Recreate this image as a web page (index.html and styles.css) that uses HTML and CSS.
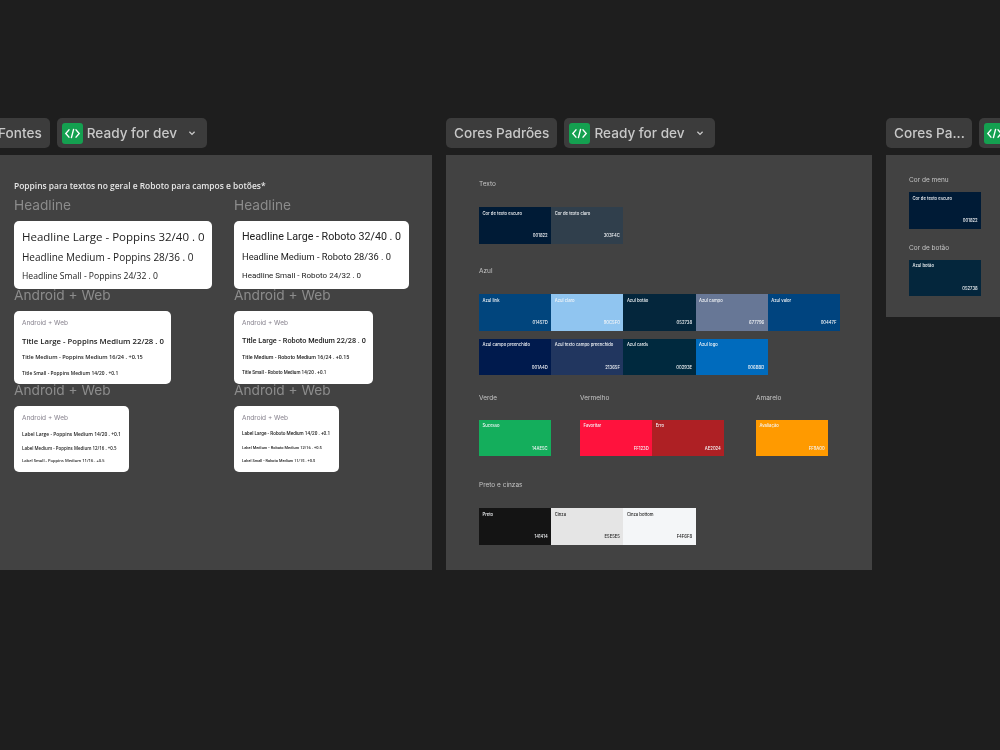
FILE: index.html
```html
<!DOCTYPE html>
<html lang="en">
<head>
    <meta charset="UTF-8">
    <meta name="viewport" content="width=device-width, initial-scale=1.0">
    <title>Design system</title>
    <link rel="stylesheet" href="styles.css">
</head>
<body>
<div class="canvas">

    <!-- Fontes -->
    <section class="board boardFontes">
        <div class="boardHead">
            <div class="chip">Fontes</div>
            <div class="chip chipDev">
                <span class="devIcon"><svg width="21" height="21" viewBox="0 0 21 21"><path d="M7.4 6.4 3.8 10.5l3.6 4.1M13.6 6.4l3.6 4.1-3.6 4.1M11.7 5.8l-2.4 9.4"/></svg></span>
                <span>Ready for dev</span>
                <svg class="chevron" width="10" height="10" viewBox="0 0 10 10"><path d="M2.4 3.8 5 6.4l2.6-2.6"/></svg>
            </div>
        </div>
        <div class="frame frameFontes">
            <p class="intro">Poppins para textos no geral e Roboto para campos e botões*</p>
            <div class="typeColumns">
                <div class="typeColumn poppins">
                    <div class="typeLabel">Headline</div>
                    <div class="typeCard headlineCard w198">
                        <div class="hl">Headline Large - Poppins 32/40 . 0</div>
                        <div class="hm">Headline Medium - Poppins 28/36 . 0</div>
                        <div class="hs">Headline Small - Poppins 24/32 . 0</div>
                    </div>
                    <div class="typeLabel">Android + Web</div>
                    <div class="typeCard titleCard w157">
                        <div class="cardTag">Android + Web</div>
                        <div class="tl">Title Large - Poppins Medium 22/28 . 0</div>
                        <div class="tm">Title Medium - Poppins Medium 16/24 . +0.15</div>
                        <div class="ts">Title Small - Poppins Medium 14/20 . +0.1</div>
                    </div>
                    <div class="typeLabel">Android + Web</div>
                    <div class="typeCard labelCard w115">
                        <div class="cardTag">Android + Web</div>
                        <div class="ll">Label Large - Poppins Medium 14/20 . +0.1</div>
                        <div class="lm">Label Medium - Poppins Medium 12/16 . +0.5</div>
                        <div class="ls">Label Small - Poppins Medium 11/16 . +0.5</div>
                    </div>
                </div>
                <div class="typeColumn roboto">
                    <div class="typeLabel">Headline</div>
                    <div class="typeCard headlineCard w175">
                        <div class="hl">Headline Large - Roboto 32/40 . 0</div>
                        <div class="hm">Headline Medium - Roboto 28/36 . 0</div>
                        <div class="hs">Headline Small - Roboto 24/32 . 0</div>
                    </div>
                    <div class="typeLabel">Android + Web</div>
                    <div class="typeCard titleCard w139">
                        <div class="cardTag">Android + Web</div>
                        <div class="tl">Title Large - Roboto Medium 22/28 . 0</div>
                        <div class="tm">Title Medium - Roboto Medium 16/24 . +0.15</div>
                        <div class="ts">Title Small - Roboto Medium 14/20 . +0.1</div>
                    </div>
                    <div class="typeLabel">Android + Web</div>
                    <div class="typeCard labelCard w105">
                        <div class="cardTag">Android + Web</div>
                        <div class="ll">Label Large - Roboto Medium 14/20 . +0.1</div>
                        <div class="lm">Label Medium - Roboto Medium 12/16 . +0.5</div>
                        <div class="ls">Label Small - Roboto Medium 11/15 . +0.5</div>
                    </div>
                </div>
            </div>
        </div>
    </section>

    <!-- Cores Padroes -->
    <section class="board boardCores">
        <div class="boardHead">
            <div class="chip">Cores Padrões</div>
            <div class="chip chipDev">
                <span class="devIcon"><svg width="21" height="21" viewBox="0 0 21 21"><path d="M7.4 6.4 3.8 10.5l3.6 4.1M13.6 6.4l3.6 4.1-3.6 4.1M11.7 5.8l-2.4 9.4"/></svg></span>
                <span>Ready for dev</span>
                <svg class="chevron" width="10" height="10" viewBox="0 0 10 10"><path d="M2.4 3.8 5 6.4l2.6-2.6"/></svg>
            </div>
        </div>
        <div class="frame frameCores">
            <div class="colorLabel">Texto</div>
            <div class="swatchRow">
                <div class="swatch c001822"><span>Cor de texto escuro</span><span class="code">001822</span></div>
                <div class="swatch c303F4C"><span>Cor de texto claro</span><span class="code">303F4C</span></div>
            </div>

            <div class="colorLabel sectionAzul">Azul</div>
            <div class="swatchRow">
                <div class="swatch c01457D"><span>Azul link</span><span class="code">01457D</span></div>
                <div class="swatch c90C5F0"><span>Azul claro</span><span class="code">90C5F0</span></div>
                <div class="swatch c052738"><span>Azul botão</span><span class="code">052738</span></div>
                <div class="swatch c677796"><span>Azul campo</span><span class="code">677796</span></div>
                <div class="swatch c00447F"><span>Azul valor</span><span class="code">00447F</span></div>
            </div>
            <div class="swatchRow rowSecond">
                <div class="swatch c001A4D"><span>Azul campo preenchido</span><span class="code">001A4D</span></div>
                <div class="swatch c21365F"><span>Azul texto campo preenchido</span><span class="code">21365F</span></div>
                <div class="swatch c00293E"><span>Azul cards</span><span class="code">00293E</span></div>
                <div class="swatch c006BBD"><span>Azul logo</span><span class="code">006BBD</span></div>
            </div>

            <div class="colorGroups">
                <div class="colorGroup groupVerde">
                    <div class="colorLabel">Verde</div>
                    <div class="swatchRow">
                        <div class="swatch c14AE5C"><span>Sucesso</span><span class="code">14AE5C</span></div>
                    </div>
                </div>
                <div class="colorGroup groupVermelho">
                    <div class="colorLabel">Vermelho</div>
                    <div class="swatchRow">
                        <div class="swatch cFF123D"><span>Favoritar</span><span class="code">FF123D</span></div>
                        <div class="swatch cAE2024"><span>Erro</span><span class="code">AE2024</span></div>
                    </div>
                </div>
                <div class="colorGroup">
                    <div class="colorLabel">Amarelo</div>
                    <div class="swatchRow">
                        <div class="swatch cFF9A00"><span>Avaliação</span><span class="code">FF9A00</span></div>
                    </div>
                </div>
            </div>

            <div class="colorLabel sectionPreto">Preto e cinzas</div>
            <div class="swatchRow">
                <div class="swatch c141414"><span>Preto</span><span class="code">141414</span></div>
                <div class="swatch cE5E5E5 darkText"><span>Cinza</span><span class="code">E5E5E5</span></div>
                <div class="swatch cF4F6F8 darkText"><span>Cinza bottom</span><span class="code">F4F6F8</span></div>
            </div>
        </div>
    </section>

    <!-- Cores Padroes, third frame cut by the window -->
    <section class="board boardMenu">
        <div class="boardHead">
            <div class="chip">Cores Pa...</div>
            <div class="chip chipDev">
                <span class="devIcon"><svg width="21" height="21" viewBox="0 0 21 21"><path d="M7.4 6.4 3.8 10.5l3.6 4.1M13.6 6.4l3.6 4.1-3.6 4.1M11.7 5.8l-2.4 9.4"/></svg></span>
                <span>Ready for dev</span>
            </div>
        </div>
        <div class="frame frameMenu">
            <div class="colorLabel">Cor de menu</div>
            <div class="swatchRow">
                <div class="swatch c001822"><span>Cor de texto escuro</span><span class="code">001822</span></div>
            </div>
            <div class="colorLabel sectionBotao">Cor de botão</div>
            <div class="swatchRow">
                <div class="swatch c052738"><span>Azul botão</span><span class="code">052738</span></div>
            </div>
        </div>
    </section>

</div>
</body>
</html>
```

FILE: styles.css
```css
body {
    margin: 0;
    background-color: #1e1e1e;
    font-family: Inter, "Noto Sans", sans-serif;
}

.canvas {
    position: relative;
    width: 1000px;
    height: 750px;
    overflow: hidden;
    filter: blur(0.35px); /* the screenshot is a scaled-up capture */
}

/* boards sit on a free canvas, like frames in the design tool */
.board {
    position: absolute;
    top: 118px;
}

.boardFontes {
    left: -10px;
    width: 442px;
}

.boardCores {
    left: 446px;
    width: 426px;
}

.boardMenu {
    left: 886px;
    width: 300px;
}

.boardHead {
    display: flex;
    gap: 7px;
    height: 30px;
    margin-bottom: 7px;
}

.chip {
    display: flex;
    align-items: center;
    padding: 0 8px;
    background-color: #3c3c3c;
    border-radius: 5px;
    color: #c8c8c8;
    font-size: 13.6px;
    font-weight: 500;
    white-space: nowrap;
}

.boardMenu .chip:first-child {
    padding-right: 7px;
}

.chipDev {
    gap: 4px;
    padding: 0 10px 0 5px;
}

.devIcon {
    display: flex;
    width: 21px;
    height: 21px;
    background-color: #14a050;
    border-radius: 3px;
}

.devIcon path {
    fill: none;
    stroke: #fff;
    stroke-width: 1.4;
}

.chevron {
    margin-left: 6px;
}

.chevron path {
    fill: none;
    stroke: #c8c8c8;
    stroke-width: 1.3;
}

.frame {
    box-sizing: border-box;
    background-color: #424242;
}

/* Fontes frame */
.frameFontes {
    height: 415px;
    padding: 26px 0 0 24px;
}

.intro {
    margin: 0;
    height: 18px;
    color: #e6e6e6;
    font-family: "Open Sans", sans-serif;
    font-size: 8.45px;
    font-weight: 600;
    line-height: 10px;
    white-space: nowrap;
}

.typeColumns {
    display: grid;
    grid-template-columns: 220px 175px;
}

.typeLabel {
    height: 16px;
    margin: -2px 0 8px;
    color: #8c8c8c;
    font-family: Inter, sans-serif;
    font-size: 13.7px;
    line-height: 16px;
    white-space: nowrap;
}

.typeCard {
    box-sizing: border-box;
    display: flex;
    flex-direction: column;
    background-color: #fff;
    border-radius: 5px;
    color: #222;
    white-space: nowrap;
}

.w198 { width: 198px; }
.w175 { width: 175px; }
.w157 { width: 157px; }
.w139 { width: 139px; }
.w115 { width: 115px; }
.w105 { width: 105px; }

.headlineCard {
    gap: 3.5px;
    height: 68px;
    padding: 8px 8px 5px;
    line-height: 16px;
}

.titleCard {
    gap: 4px;
    height: 73px;
    padding: 7px 8px 5px;
    line-height: 12px;
}

.labelCard {
    gap: 3.75px;
    height: 66px;
    padding: 7px 8px 5px;
    line-height: 10px;
}

.cardTag {
    margin-bottom: 2px;
    color: #85808c;
    font-family: Inter, sans-serif;
    font-size: 6.5px;
    line-height: 10px;
}

.titleCard .cardTag {
    margin-bottom: 3px;
}

/* Poppins is not installed, Open Sans is the nearest width */
.poppins .typeCard {
    font-family: "Open Sans", sans-serif;
}

.poppins .hl { font-size: 11.5px; }
.poppins .hm { font-size: 10px; }
.poppins .hs { font-size: 8.6px; }

.poppins .tl { font-size: 7.75px; font-weight: 600; }
.poppins .tm { font-size: 5.6px; font-weight: 600; }
.poppins .ts { font-size: 4.9px; font-weight: 600; }

.poppins .ll { font-size: 4.9px; font-weight: 600; }
.poppins .lm { font-size: 4.4px; font-weight: 600; }
.poppins .ls { font-size: 4.1px; font-weight: 600; }

.roboto .typeCard {
    font-family: Roboto, sans-serif;
}

.roboto .hl { font-size: 10.7px; }
.roboto .hm { font-size: 9.3px; }
.roboto .hs { font-size: 8px; }

.roboto .tl { font-size: 7.3px; font-weight: 500; }
.roboto .tm { font-size: 5.35px; font-weight: 500; }
.roboto .ts { font-size: 4.6px; font-weight: 500; }

.roboto .ll { font-size: 4.7px; font-weight: 500; }
.roboto .lm { font-size: 4px; font-weight: 500; }
.roboto .ls { font-size: 3.9px; font-weight: 500; }

/* Color frames */
.frameCores {
    height: 415px;
    padding: 25px 0 0 33px;
}

.frameMenu {
    height: 162px;
    padding: 21px 0 0 23px;
}

.colorLabel {
    height: 8px;
    margin-bottom: 19px;
    color: #c4c4c4;
    font-size: 6.5px;
    line-height: 8px;
    white-space: nowrap;
}

.frameMenu .colorLabel {
    margin-bottom: 8px;
}

.sectionAzul {
    margin-top: 23.5px;
}

.sectionPreto {
    margin-top: 25px;
}

.frameMenu .sectionBotao {
    margin-top: 15px;
}

.swatchRow {
    display: flex;
}

.rowSecond {
    margin-top: 8px;
}

.colorGroups {
    display: flex;
    margin-top: 19px;
}

.colorGroups .colorLabel {
    margin-bottom: 17.5px;
}

.groupVerde {
    width: 101px;
}

.groupVermelho {
    width: 176px;
}

.swatch {
    box-sizing: border-box;
    display: flex;
    flex-direction: column;
    justify-content: space-between;
    width: 72.2px;
    height: 36.5px;
    padding: 3.5px 3.5px 5.5px;
    color: #f4f6f8;
    font-size: 4.2px;
    font-weight: 500;
    line-height: 5px;
    white-space: nowrap;
}

.code {
    align-self: flex-end;
}

.darkText {
    color: #222;
}

.c001822 { background-color: #001b36; }
.c303F4C { background-color: #303f4c; }
.c01457D { background-color: #01457d; }
.c90C5F0 { background-color: #90c5f0; }
.c052738 { background-color: #04263c; }
.c677796 { background-color: #677796; }
.c00447F { background-color: #00447f; }
.c001A4D { background-color: #001a4d; }
.c21365F { background-color: #21365f; }
.c00293E { background-color: #00293e; }
.c006BBD { background-color: #006bbd; }
.c14AE5C { background-color: #14ae5c; }
.cFF123D { background-color: #ff123d; }
.cAE2024 { background-color: #ae2024; }
.cFF9A00 { background-color: #ff9a00; }
.c141414 { background-color: #141414; }
.cE5E5E5 { background-color: #e5e5e5; }
.cF4F6F8 { background-color: #f4f6f8; }
```
